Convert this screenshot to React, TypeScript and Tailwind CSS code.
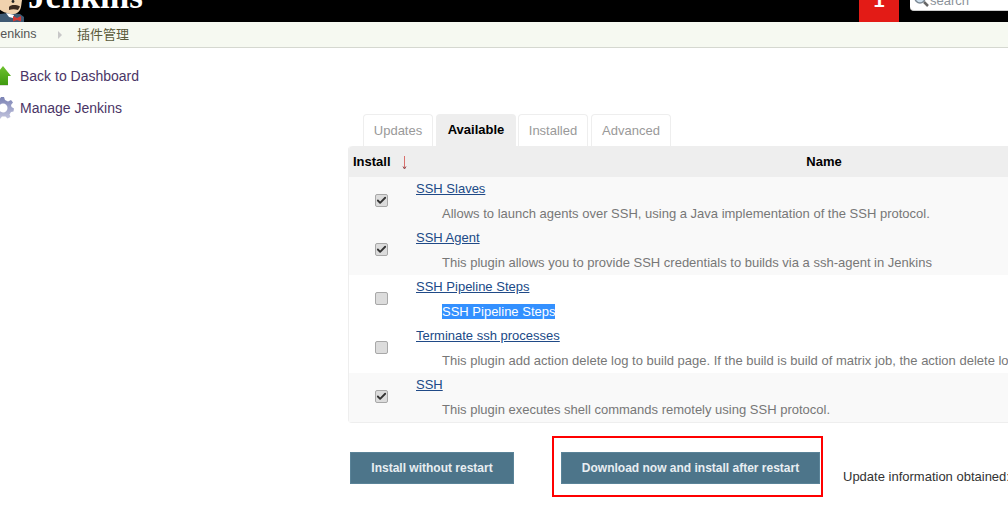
import { Check } from 'lucide-react';

const plugins = [
  { name: 'SSH Slaves', desc: 'Allows to launch agents over SSH, using a Java implementation of the SSH protocol.', checked: true, shaded: true },
  { name: 'SSH Agent', desc: 'This plugin allows you to provide SSH credentials to builds via a ssh-agent in Jenkins', checked: true, shaded: true },
  { name: 'SSH Pipeline Steps', desc: 'SSH Pipeline Steps', checked: false, shaded: false, selected: true },
  { name: 'Terminate ssh processes', desc: 'This plugin add action delete log to build page. If the build is build of matrix job, the action delete log of all configurations.', checked: false, shaded: false },
  { name: 'SSH', desc: 'This plugin executes shell commands remotely using SSH protocol.', checked: true, shaded: true },
];

const tabs = [
  { label: 'Updates', cls: 'w-[70px] border border-b-0 border-[#eeeeee] text-[#999999]' },
  { label: 'Available', cls: 'w-[80px] ml-[1px] bg-[#eeeeee] font-bold text-black' },
  { label: 'Installed', cls: 'w-[70px] border border-b-0 border-[#eeeeee] text-[#999999]' },
  { label: 'Advanced', cls: 'w-[80px] ml-[1px] border border-b-0 border-[#eeeeee] text-[#999999]' },
];

function Logo() {
  return (
    <svg width="28" height="22" viewBox="0 0 28 22" className="shrink-0">
      <path d="M0 22 L0 14 L8 13 L20 14 L24 17 L24 22 Z" fill="#3f5a73" />
      <path d="M-1 0 L22 0 L21 7 C20 12 16 15 10 14 C5 13 1 11 -1 9 Z" fill="#f0d2ae" />
      <path d="M9 7 C11 4.5 16 4.5 20 6.5 L18 10 C15 9 12 9 9 10 Z" fill="#3b2a20" />
      <circle cx="13" cy="1.5" r="1.4" fill="#222" />
      <path d="M6 13 L14 15 L13 18 L9 17 Z" fill="#ffffff" />
      <path d="M13 16 L17 18 L21 16 L21 21.5 L17 20 L13 21.5 Z" fill="#d33833" />
    </svg>
  );
}

function Arrow() {
  return (
    <svg width="18" height="22" viewBox="0 0 18 22" className="shrink-0">
      <defs>
        <linearGradient id="arrowFill" x1="0" y1="0" x2="0" y2="1">
          <stop offset="0" stopColor="#6fc22f" />
          <stop offset="1" stopColor="#3f9a10" />
        </linearGradient>
      </defs>
      <path d="M7 1 L15 11 L12 11 L12 20 L2 20 L2 11 L-1 11 Z" fill="url(#arrowFill)" />
      <path d="M2 20 L12 20 L12 21 L2 21 Z" fill="#dddddd" />
    </svg>
  );
}

function Gear() {
  return (
    <svg width="18" height="22" viewBox="0 0 18 22" className="shrink-0">
      <defs>
        <linearGradient id="gearFill" x1="0" y1="0" x2="0" y2="1">
          <stop offset="0" stopColor="#7b82b4" />
          <stop offset="1" stopColor="#c3c5de" />
        </linearGradient>
      </defs>
      <path
        d="M5 0 L8 0 L9 3 L12 4.5 L15 3 L17 5.5 L15 8 L15.5 10 L18 11.5 L17.5 14.5 L15 15 L13.5 17.5 L14.5 20 L11.5 21.5 L9.5 19.5 L6 19.5 L4 22 L1 20.5 L1.5 17.5 L0 15 L-2 14 L-2 8 L0 7 L0 4 L3 3 Z"
        fill="url(#gearFill)"
      />
      <circle cx="7" cy="11" r="4.5" fill="#ffffff" />
    </svg>
  );
}

function Box({ checked }: { checked: boolean }) {
  return (
    <span className="w-[13px] h-[13px] rounded-[2px] bg-[#dcdcdc] border border-[#a8a8a8] flex items-center justify-center">
      {checked && <Check size={11} strokeWidth={4} className="text-[#333]" />}
    </span>
  );
}

export default function App() {
  return (
    <div className="w-[1008px] h-[530px] overflow-hidden bg-white text-[13px] text-[#333] font-['Liberation_Sans','Noto_Sans_CJK_SC',sans-serif]">
      {/* Header */}
      <div className="h-[22px] bg-black flex overflow-hidden">
        <Logo />
        <div className="w-[116px] shrink-0 -mt-[23px] font-['Liberation_Serif',serif] font-bold text-[35px] leading-[40px] text-white">
          Jenkins
        </div>
        <div className="ml-[715px] w-[40px] shrink-0 h-[22px] bg-[#e31b16] text-white font-bold text-[20px] leading-[20px] text-center overflow-hidden">
          <div className="-mt-[10px]">1</div>
        </div>
        <div className="ml-[11px] -mt-[1px] w-[110px] shrink-0 h-[12px] bg-white rounded-bl-[4px] border-b border-[#ccc] flex items-end overflow-hidden pl-[4px]">
          <svg width="16" height="14" viewBox="0 0 16 14" className="shrink-0 mb-[1px]">
            <circle cx="6" cy="3" r="5" fill="#cfe0ee" stroke="#7d8a96" strokeWidth="1.5" />
            <path d="M10 7 L14 11" stroke="#666" strokeWidth="2.5" />
          </svg>
          <span className="text-[#8a9199] text-[13px] leading-[16px] mb-[1px]">search</span>
        </div>
      </div>

      {/* Breadcrumb */}
      <div className="h-[26px] bg-[#f6f9f1] border-b border-[#d5d8d0] flex items-center text-[13px] text-[#555]">
        <span className="w-[41px] shrink-0 -ml-[6px] text-[12.5px]">Jenkins</span>
        <span className="ml-[23px] w-0 h-0 border-y-[4px] border-y-transparent border-l-[4px] border-l-[#c8c8c8]"></span>
        <span className="ml-[15px] text-[#5a5a3a]">插件管理</span>
      </div>

      <div className="flex">
        {/* Sidebar */}
        <div className="w-[348px] shrink-0 pt-[17px] text-[14px] text-[#4a3566]">
          <div className="flex items-center h-[22px] -ml-[4px] gap-[6px]">
            <Arrow />
            <span>Back to Dashboard</span>
          </div>
          <div className="flex items-center h-[22px] mt-[10px] -ml-[4px] gap-[6px]">
            <Gear />
            <span>Manage Jenkins</span>
          </div>
        </div>

        {/* Main */}
        <div className="w-[1000px] shrink-0 pt-[66px]">
          <div className="flex ml-[15px] gap-[2px] h-[32px]">
            {tabs.map((tab) => (
              <div key={tab.label} className={`flex items-center justify-center rounded-t-[4px] ${tab.cls}`}>
                {tab.label}
              </div>
            ))}
          </div>

          <div className="w-[952px] rounded-[4px] border-b border-l border-[#eeeeee]">
            <div className="h-[31px] bg-[#eeeeee] rounded-tl-[4px] flex items-center font-bold text-black">
              <div className="w-[67px] pl-[4px] flex items-center">
                Install
                <svg width="7" height="14" viewBox="0 0 7 14" className="ml-[10px] mt-[2px]">
                  <path d="M3.5 0 L3.5 12" stroke="#d9706c" strokeWidth="1" />
                  <path d="M2 10.5 L3.5 13 L5 10.5" stroke="#8a4a50" strokeWidth="1" fill="none" />
                </svg>
              </div>
              <div className="flex-1 text-center pr-[68px]">Name</div>
            </div>
            {plugins.map((plugin) => (
              <div key={plugin.name} className={`h-[49px] flex ${plugin.shaded ? 'bg-[#f9f9f9]' : 'bg-white'}`}>
                <div className="w-[67px] flex items-center justify-center pr-[3px] pb-[3px]">
                  <Box checked={plugin.checked} />
                </div>
                <div className="flex-1 whitespace-nowrap overflow-hidden">
                  <div className="h-[23px] flex items-center">
                    <span className="underline text-[#204a87]">{plugin.name}</span>
                  </div>
                  <div className="h-[26px] flex items-center pl-[26px] pt-[1px] text-[#777777]">
                    {plugin.selected ? (
                      <span className="bg-[#3390ff] text-white leading-[15px]">{plugin.desc}</span>
                    ) : (
                      plugin.desc
                    )}
                  </div>
                </div>
              </div>
            ))}
          </div>

          {/* Footer buttons */}
          <div className="flex items-start mt-[13px] ml-[2px] whitespace-nowrap">
            <div className="mt-[16px] w-[164px] h-[32px] bg-[#4d758a] border border-[#5a8398] text-[#e8eef2] font-bold text-[12px] flex items-center justify-center">
              Install without restart
            </div>
            <div className="ml-[38px] w-[271px] h-[61px] border-2 border-[#ff0000] pl-[7px] pt-[14px]">
              <div className="w-[259px] h-[32px] bg-[#4d758a] border border-[#5a8398] text-[#e8eef2] font-bold text-[12px] flex items-center justify-center">
                Download now and install after restart
              </div>
            </div>
            <div className="ml-[20px] mt-[31px]">Update information obtained: 1 min ago</div>
          </div>
        </div>
      </div>
    </div>
  );
}
